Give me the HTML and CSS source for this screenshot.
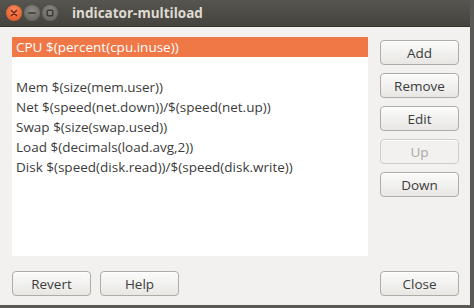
FILE: index.html
```html
<!DOCTYPE html>
<html>
<head>
<meta charset="utf-8">
<link rel="stylesheet" href="styles.css">
</head>
<body>
<div class="window">
  <div class="titlebar">
    <div class="controls">
      <span class="wbtn close-w">
        <svg width="16" height="16" viewBox="0 0 16 16"><path d="M5.5 5.5 L10.5 10.5 M10.5 5.5 L5.5 10.5" stroke="#7a2a12" stroke-width="1.6" stroke-linecap="round"/></svg>
      </span>
      <span class="wbtn">
        <svg width="16" height="16" viewBox="0 0 16 16"><path d="M5 8 H11" stroke="#3a3935" stroke-width="1.6" stroke-linecap="round"/></svg>
      </span>
      <span class="wbtn">
        <svg width="16" height="16" viewBox="0 0 16 16"><rect x="5.2" y="5.2" width="5.6" height="5.6" rx="1" fill="none" stroke="#3a3935" stroke-width="1.4"/></svg>
      </span>
    </div>
    <div class="title">indicator-multiload</div>
  </div>
  <div class="content">
    <div class="main">
      <div class="list">
        <div class="row selected">CPU $(percent(cpu.inuse))</div>
        <div class="row"></div>
        <div class="row">Mem $(size(mem.user))</div>
        <div class="row">Net $(speed(net.down))/$(speed(net.up))</div>
        <div class="row">Swap $(size(swap.used))</div>
        <div class="row">Load $(decimals(load.avg,2))</div>
        <div class="row">Disk $(speed(disk.read))/$(speed(disk.write))</div>
      </div>
      <div class="side">
        <button class="btn">Add</button>
        <button class="btn">Remove</button>
        <button class="btn">Edit</button>
        <button class="btn disabled">Up</button>
        <button class="btn">Down</button>
      </div>
    </div>
    <div class="footer">
      <div class="left">
        <button class="btn">Revert</button>
        <button class="btn">Help</button>
      </div>
      <button class="btn">Close</button>
    </div>
  </div>
</div>
</body>
</html>
```
FILE: styles.css
```css
* { box-sizing: border-box; }
html, body { margin: 0; padding: 0; }
body {
  width: 474px;
  height: 308px;
  background: #5a5955;
  font-family: "Open Sans", "DejaVu Sans", sans-serif;
  overflow: hidden;
}
.window {
  width: 470px;
  height: 305px;
  background: #f2f1f0;
  display: flex;
  flex-direction: column;
}
.titlebar {
  height: 27px;
  background: linear-gradient(#57554f, #45433e);
  display: flex;
  align-items: center;
  padding-left: 6px;
  border-bottom: 1px solid #35342f;
}
.controls { display: flex; gap: 2px; }
.wbtn {
  width: 16px;
  height: 16px;
  border-radius: 50%;
  background: radial-gradient(circle at 50% 35%, #8a8882, #5f5d58);
  display: flex;
  align-items: center;
  justify-content: center;
}
.wbtn svg { display: block; }
.close-w { background: radial-gradient(circle at 50% 35%, #f78b5e, #de4d1f); }
.title {
  margin-left: 14px;
  color: #dfdbd2;
  font-weight: bold;
  font-size: 13.5px;
}
.content {
  flex: 1;
  display: flex;
  flex-direction: column;
  padding: 10px 11px 9px 12px;
}
.main {
  display: flex;
  gap: 12px;
  height: 219px;
}
.list {
  width: 357px;
  background: #ffffff;
}
.row {
  height: 20px;
  line-height: 20px;
  font-size: 13.5px;
  color: #3c3c3c;
  padding-left: 4px;
  white-space: nowrap;
}
.row.selected {
  background: #f07746;
  color: #ffffff;
}
.side {
  display: flex;
  flex-direction: column;
  gap: 8px;
  padding-top: 3px;
}
.btn {
  width: 79px;
  height: 25px;
  border: 1px solid #aeaca6;
  border-radius: 4px;
  background: linear-gradient(#fbfbfa, #e8e7e4);
  font-family: inherit;
  font-size: 13.5px;
  color: #3c3c3c;
  padding: 0;
  box-shadow: inset 0 1px 0 #ffffff;
}
.btn.disabled {
  color: #a9a8a4;
  border-color: #cfcdc8;
  background: #f2f1f0;
}
.footer {
  margin-top: auto;
  display: flex;
  justify-content: space-between;
}
.left { display: flex; gap: 9px; }
```
